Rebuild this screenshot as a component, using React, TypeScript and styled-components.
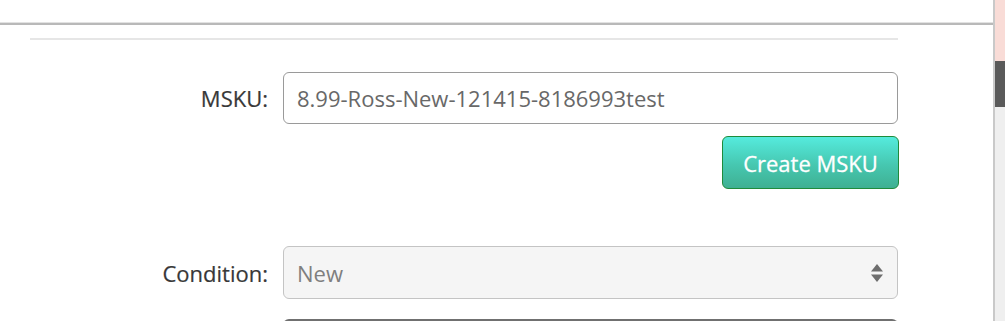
import React from 'react';
import styled, { createGlobalStyle } from 'styled-components';

const GlobalStyle = createGlobalStyle`
  html, body {
    margin: 0;
    padding: 0;
    background: #fff;
    overflow: hidden;
  }
  body {
    font-family: "Open Sans", "Liberation Sans", sans-serif;
  }
`

const Page = styled.div`
  display: grid;
  grid-template-columns: 993px 12px;
  width: 1005px;
  height: 321px;
  overflow: hidden;
`

const Main = styled.div`
  display: flex;
  flex-direction: column;
`

const TopBar = styled.div`
  height: 23px;
  border-bottom: 2px solid #b9b9b9;
  box-shadow: 0 -1px 0 #e2e2e2 inset;
`

const Content = styled.div`
  width: 868px;
  padding: 13px 0 0 30px;
`

const Divider = styled.hr`
  margin: 0;
  height: 0;
  border: none;
  border-top: 2px solid #e6e6e6;
`

const Form = styled.div`
  display: flex;
  flex-direction: column;
  padding-top: 32px;
`

const Row = styled.div`
  display: grid;
  grid-template-columns: 238px 615px;
  column-gap: 15px;
  align-items: center;
`

const Label = styled.label`
  text-align: right;
  font-size: 22px;
  color: #383838;
  -webkit-text-stroke: 0.2px #383838;
`

const TextInput = styled.div`
  box-sizing: border-box;
  height: 52px;
  display: flex;
  align-items: center;
  padding: 0 13px;
  border: 1px solid #9a9a9a;
  border-radius: 6px;
  font-size: 22px;
  color: #686868;
  background: #fff;
`

const ButtonRow = styled.div`
  display: flex;
  justify-content: flex-end;
  width: 869px;
  padding-top: 12px;
  margin-bottom: 57px;
`

const Button = styled.button`
  box-sizing: border-box;
  width: 177px;
  height: 53px;
  border: 1px solid #1f8b3b;
  border-radius: 6px;
  background: linear-gradient(to bottom, #55ebdd 0%, #46c7b0 55%, #3fb092 100%);
  color: #fff;
  font-family: inherit;
  font-size: 22px;
  -webkit-text-stroke: 0.3px #fff;
  padding: 0;
`

const Select = styled.div`
  box-sizing: border-box;
  height: 53px;
  display: flex;
  align-items: center;
  justify-content: space-between;
  padding: 0 13px 0 13px;
  border: 1px solid #c4c4c4;
  border-radius: 6px;
  background: #f5f5f5;
  font-size: 22px;
  color: #7f7f7f;
`

const NextInput = styled.div`
  box-sizing: border-box;
  margin-top: 20px;
  height: 40px;
  border: 2px solid #707070;
  border-bottom: none;
  border-radius: 6px 6px 0 0;
`

const Strip = styled.div`
  display: grid;
  grid-template-rows: 61px 46px 1fr;
  border-left: 2px solid #c9c9c9;
`

const Seg = styled.div<{ $bg: string }>`
  background: ${p => p.$bg};
`

const Arrows = () => (
  <svg width="14" height="20" viewBox="0 0 14 20">
    <path d="M7 1 L13 8.5 H1 Z" fill="#6e6e6e" />
    <path d="M7 19 L13 11.5 H1 Z" fill="#6e6e6e" />
  </svg>
);

const App = () => {
  return (
    <>
      <GlobalStyle />
      <Page>
        <Main>
          <TopBar />
          <Content>
            <Divider />
            <Form>
              <Row>
                <Label>MSKU:</Label>
                <TextInput>8.99-Ross-New-121415-8186993test</TextInput>
              </Row>
              <ButtonRow>
                <Button type="button">Create MSKU</Button>
              </ButtonRow>
              <Row>
                <Label>Condition:</Label>
                <Select>
                  <span>New</span>
                  <Arrows />
                </Select>
              </Row>
              <Row>
                <span />
                <NextInput />
              </Row>
            </Form>
          </Content>
        </Main>
        <Strip>
          <Seg $bg="#f9dcd7" />
          <Seg $bg="#5a5a5a" />
          <Seg $bg="#efefef" />
        </Strip>
      </Page>
    </>
  );
};

export default App;
